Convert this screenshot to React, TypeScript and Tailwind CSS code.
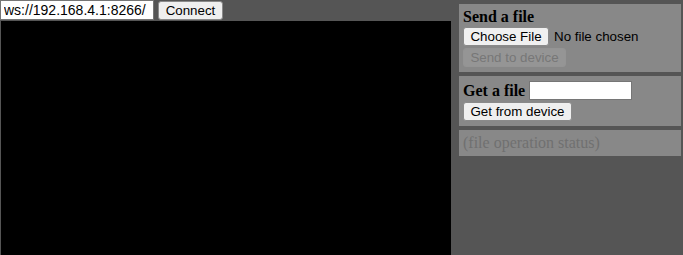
import React from "react";

const btn =
  "box-border bg-[#efefef] border border-[#8a8a8a] rounded-[3px] text-[13.33px] leading-none text-black flex items-center justify-center font-['Liberation_Sans',Arial,sans-serif]";

export default function App() {
  return (
    <div className="w-[683px] h-[255px] bg-[#555555] flex overflow-hidden font-['Liberation_Serif','Times_New_Roman',serif]">
      <div className="w-[451px] flex flex-col">
        <div className="h-[21px] flex items-start">
          <input
            readOnly
            value="ws://192.168.4.1:8266/"
            className="box-border w-[154px] h-[20px] bg-white border border-[#767676] px-[3px] text-[14px] text-black outline-none font-['Liberation_Sans',Arial,sans-serif]"
          />
          <button className={`${btn} ml-[4px] mt-px w-[65px] h-[19px]`}>Connect</button>
        </div>
        <div className="ml-px flex-1 bg-black" />
      </div>
      <div className="ml-[8px] w-[222px] flex flex-col gap-[4px] pt-[4px]">
        <div className="bg-[#888888] p-[4px] flex flex-col">
          <div className="h-[18px] text-[16px] font-bold leading-[18px] text-black">Send a file</div>
          <div className="h-[21px] flex items-center">
            <button className={`${btn} w-[86px] h-[19px] bg-[#f0f0f0]`}>Choose File</button>
            <span className="ml-[5px] text-[13.33px] text-black font-['Liberation_Sans',Arial,sans-serif]">
              No file chosen
            </span>
          </div>
          <div className="h-[21px] flex items-center">
            <button
              disabled
              className="box-border w-[103px] h-[19px] rounded-[3px] border border-[#949494] bg-[#959595] text-[#777777] text-[13.33px] leading-none flex items-center justify-center font-['Liberation_Sans',Arial,sans-serif]"
            >
              Send to device
            </button>
          </div>
        </div>
        <div className="bg-[#888888] p-[4px] flex flex-col">
          <div className="h-[21px] flex items-center">
            <span className="text-[16px] font-bold text-black leading-[18px]">Get a file</span>
            <input
              readOnly
              className="ml-[4px] box-border w-[103px] h-[19px] bg-white border border-[#767676] outline-none"
            />
          </div>
          <div className="h-[21px] flex items-center">
            <button className={`${btn} w-[109px] h-[19px]`}>Get from device</button>
          </div>
        </div>
        <div className="bg-[#888888] p-[4px]">
          <div className="h-[18px] text-[16px] leading-[18px] text-[#707070]">(file operation status)</div>
        </div>
      </div>
    </div>
  );
}
